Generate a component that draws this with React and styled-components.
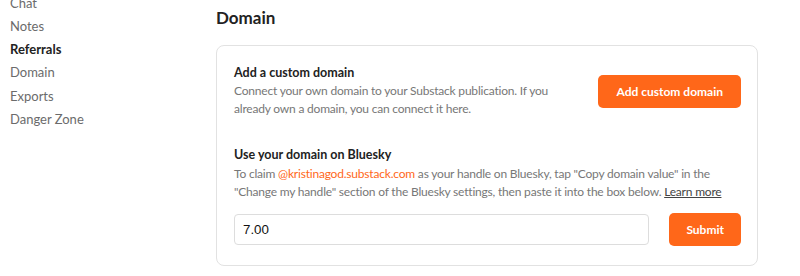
import React from 'react'
import styled, { createGlobalStyle } from 'styled-components'

const GlobalStyle = createGlobalStyle`
  html, body {
    margin: 0;
    padding: 0;
    background: #fff;
  }
  body {
    font-family: Lato, "Noto Sans", sans-serif;
    color: #222;
    overflow: hidden;
  }
`

const orange = '#ff6719'

const Page = styled.div`
  display: flex;
  width: 800px;
  height: 276px;
  overflow: hidden;
`

const Sidebar = styled.nav`
  width: 206px;
  padding-left: 10px;
  margin-top: -8.5px;
  display: flex;
  flex-direction: column;
`

const NavItem = styled.div`
  font-size: 13px;
  line-height: 23.3px;
  color: ${p => (p.active ? '#222' : '#6b6b6b')};
  font-weight: ${p => (p.active ? 700 : 400)};
`

const Main = styled.main`
  width: 542px;
  display: flex;
  flex-direction: column;
`

const Heading = styled.h2`
  margin: 7px 0 0;
  font-size: 17px;
  line-height: 22px;
  font-weight: 700;
  color: #222;
`

const Card = styled.section`
  margin-top: 16px;
  border: 1px solid #e2e2e2;
  border-radius: 8px;
  padding: 18px 16px 19px 17px;
  display: flex;
  flex-direction: column;
  gap: 28px;
`

const Row = styled.div`
  display: flex;
  align-items: center;
  justify-content: space-between;
`

const Block = styled.div`
  display: flex;
  flex-direction: column;
`

const Title = styled.div`
  font-size: 12.5px;
  line-height: 18px;
  font-weight: 700;
  color: #222;
`

const Desc = styled.p`
  margin: ${p => (p.spaced ? '1px 0 0' : '0')};
  font-size: 12px;
  line-height: 18px;
  letter-spacing: -0.2px;
  color: #777;
  max-width: ${p => p.max || 'none'};
`

const Handle = styled.span`
  color: ${orange};
`

const Learn = styled.a`
  color: #444;
  text-decoration: underline;
`

const Button = styled.button`
  height: 33px;
  padding: 0 ${p => p.px || 18}px;
  border: none;
  border-radius: 5px;
  background: ${orange};
  color: #fff;
  font-family: Lato, "Noto Sans", sans-serif;
  font-size: 12px;
  font-weight: 700;
  cursor: pointer;
`

const Form = styled.div`
  display: flex;
  align-items: center;
  gap: 20px;
  margin-top: 12px;
`

const Input = styled.input`
  flex: 1;
  height: 31px;
  box-sizing: border-box;
  border: 1px solid #ddd;
  border-radius: 4px;
  padding: 0 8px;
  font-family: "Liberation Sans", Arial, sans-serif;
  font-size: 13.333px;
  color: #111;
  outline: none;
`

export default function App() {
  const nav = ['Chat', 'Notes', 'Referrals', 'Domain', 'Exports', 'Danger Zone']
  return (
    <>
      <GlobalStyle />
      <Page>
        <Sidebar>
          {nav.map(n => (
            <NavItem key={n} active={n === 'Referrals'}>{n}</NavItem>
          ))}
        </Sidebar>
        <Main>
          <Heading>Domain</Heading>
          <Card>
            <Row>
              <Block>
                <Title>Add a custom domain</Title>
                <Desc max="320px">
                  Connect your own domain to your Substack publication. If you already own a
                  domain, you can connect it here.
                </Desc>
              </Block>
              <Button>Add custom domain</Button>
            </Row>
            <Block>
              <Title>Use your domain on Bluesky</Title>
              <Desc spaced>
                To claim <Handle>@kristinagod.substack.com</Handle> as your handle on Bluesky,
                tap "Copy domain value" in the "Change my handle" section of the Bluesky
                settings, then paste it into the box below. <Learn>Learn more</Learn>
              </Desc>
              <Form>
                <Input defaultValue="7.00" />
                <Button px={17}>Submit</Button>
              </Form>
            </Block>
          </Card>
        </Main>
      </Page>
    </>
  )
}
